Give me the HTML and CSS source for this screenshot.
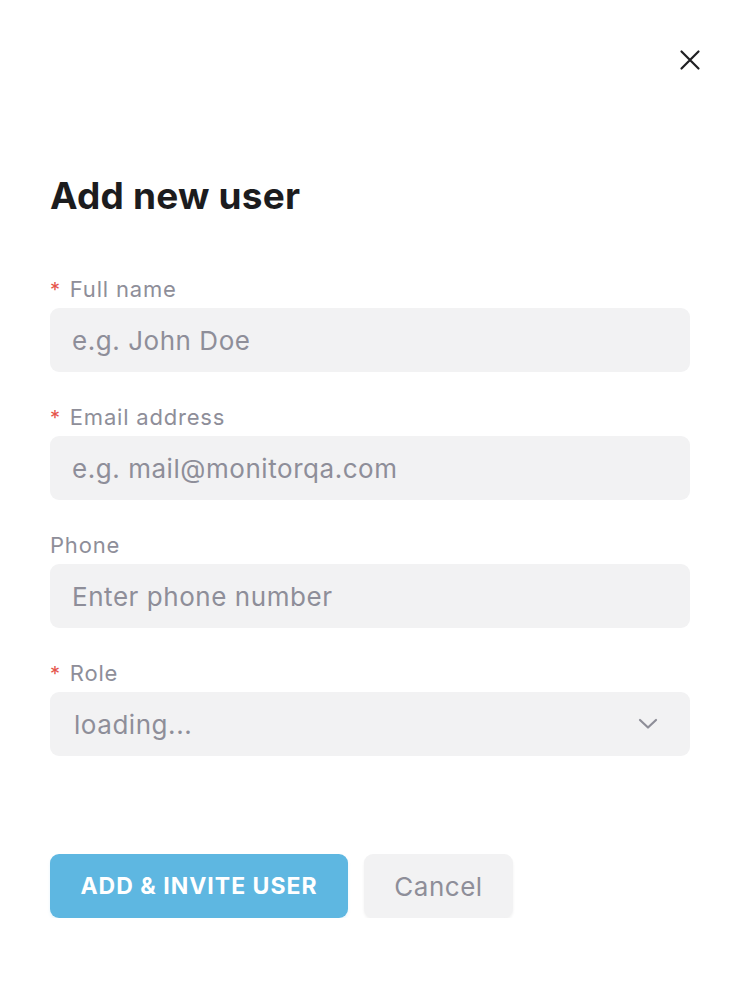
FILE: index.html
```html
<!DOCTYPE html>
<html lang="en">
<head>
<meta charset="utf-8">
<title>Add new user</title>
<link rel="stylesheet" href="styles.css">
</head>
<body>
<div class="modal">
  <div class="close-row">
    <button class="close" aria-label="Close">
      <svg width="24" height="24" viewBox="0 0 24 24"><path d="M3.5 3.5 L20.5 20.5 M20.5 3.5 L3.5 20.5" stroke="#1f1f22" stroke-width="2.2" stroke-linecap="round" fill="none"/></svg>
    </button>
  </div>
  <h1 class="title">Add new user</h1>
  <form class="form">
    <div class="field">
      <label class="label"><span class="req">*</span>Full name</label>
      <input class="input" type="text" placeholder="e.g. John Doe">
    </div>
    <div class="field">
      <label class="label"><span class="req">*</span>Email address</label>
      <input class="input" type="text" placeholder="e.g. mail@monitorqa.com">
    </div>
    <div class="field">
      <label class="label">Phone</label>
      <input class="input" type="text" placeholder="Enter phone number">
    </div>
    <div class="field">
      <label class="label"><span class="req">*</span>Role</label>
      <div class="select">
        <span class="select-text">loading...</span>
        <svg class="chev" width="20" height="12" viewBox="0 0 20 12"><path d="M2 2 L10 9.5 L18 2" stroke="#8e8e98" stroke-width="2.2" stroke-linecap="round" stroke-linejoin="round" fill="none"/></svg>
      </div>
    </div>
    <div class="actions">
      <button type="button" class="btn primary">ADD &amp; INVITE USER</button>
      <button type="button" class="btn secondary">Cancel</button>
    </div>
  </form>
</div>
</body>
</html>
```

FILE: styles.css
```css
* { box-sizing: border-box; }
html, body { margin: 0; padding: 0; background: #ffffff; }
body { font-family: Inter, "Noto Sans", sans-serif; color: #1f1f22; }

.modal {
  width: 734px;
  padding: 48px 32px 0 50px;
}
.close-row {
  display: flex;
  justify-content: flex-end;
}
.close {
  width: 24px;
  height: 24px;
  padding: 0;
  border: 0;
  background: none;
  display: flex;
  cursor: pointer;
}
.title {
  margin: 102px 0 0 0;
  height: 44px;
  font-size: 37px;
  line-height: 44px;
  font-weight: 700;
  letter-spacing: 0.2px;
  color: #1c1c1e;
}
.form {
  margin-top: 56px;
  width: 640px;
  display: flex;
  flex-direction: column;
}
.field {
  display: flex;
  flex-direction: column;
  gap: 4px;
  margin-bottom: 30px;
}
.label {
  height: 30px;
  font-size: 22px;
  line-height: 30px;
  letter-spacing: 0.8px;
  color: #8e8e99;
  display: flex;
  align-items: baseline;
  overflow: hidden;
}
.req {
  color: #e5534b;
  margin-right: 9px;
  font-size: 20px;
  line-height: 26px;
}
.input, .select {
  height: 64px;
  flex: 0 0 64px;
  width: 100%;
  border: 0;
  border-radius: 9px;
  background: #f2f2f3;
  font-family: inherit;
  font-size: 26px;
  letter-spacing: 0.55px;
  color: #1f1f22;
  padding: 0 22px;
  outline: none;
}
.input::placeholder { color: #8e8e99; opacity: 1; }
.select {
  display: flex;
  align-items: center;
  justify-content: space-between;
  padding: 0 32px 0 24px;
}
.select-text { color: #8e8e99; }
.actions {
  margin-top: 68px;
  display: flex;
  gap: 16px;
}
.btn {
  height: 64px;
  border: 0;
  border-radius: 9px;
  font-family: inherit;
  cursor: pointer;
}
.primary {
  width: 298px;
  background: #5eb7e1;
  color: #ffffff;
  font-weight: 700;
  font-size: 23px;
  letter-spacing: 1px;
  box-shadow: 0 2px 3px rgba(94,183,225,0.15);
}
.secondary {
  width: 149px;
  background: #f2f2f3;
  color: #8e8e99;
  font-size: 26px;
  letter-spacing: 0.5px;
  box-shadow: 0 2px 3px rgba(0,0,0,0.06);
}
```
